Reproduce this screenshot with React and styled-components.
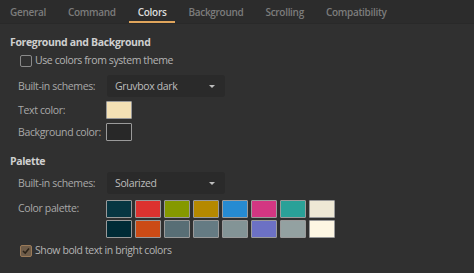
import styled, { createGlobalStyle } from "styled-components"

const Global = createGlobalStyle`
  html, body { margin: 0; padding: 0; background: #303030; }
  body { font-family: "Open Sans", "Noto Sans", sans-serif; }
`

const Page = styled.div`
  width: 474px;
  height: 273px;
  background: #303030;
  overflow: hidden;
  display: flex;
  flex-direction: column;
  white-space: nowrap;
`

const TabBar = styled.div`
  height: 23px;
  display: flex;
  padding-left: 10px;
  border-bottom: 1px solid #292929;
  background: #2c2c2c;
`

const Tab = styled.div`
  position: relative;
  padding: 0 11px;
  display: flex;
  align-items: center;
  font-size: 10px;
  font-weight: 600;
  letter-spacing: -0.3px;
  color: ${p => (p.active ? "#dcdcdc" : "#7c7c7c")};
  &:first-child { padding-left: 0; }
  &::after {
    content: "";
    display: ${p => (p.active ? "block" : "none")};
    position: absolute;
    left: 2px;
    right: 2px;
    bottom: 0;
    height: 2px;
    background: #e0a55c;
  }
`

const Content = styled.div`
  padding: 11px 10px 0 10px;
  display: flex;
  flex-direction: column;
`

const Heading = styled.div`
  font-size: 10.5px;
  font-weight: 700;
  color: #cfcfcf;
  letter-spacing: -0.35px;
  line-height: 14px;
  margin-top: ${p => p.top || 0}px;
`

const CheckRow = styled.label`
  display: flex;
  align-items: center;
  gap: 3px;
  margin: ${p => p.margin};
  padding-left: 10px;
  font-size: 10.5px;
  color: #b4b4b4;
  letter-spacing: -0.4px;
  line-height: 13px;
`

const Box = styled.span`
  width: 10px;
  height: 10px;
  border-radius: 2px;
  border: 1px solid ${p => (p.checked ? "#9a7a58" : "#8a8a8a")};
  background: ${p => (p.checked ? "#6e5c49" : "transparent")};
  display: flex;
  align-items: center;
  justify-content: center;
`

const Form = styled.div`
  display: grid;
  grid-template-columns: 88px auto;
  row-gap: ${p => p.gap || 4}px;
  padding-left: 8px;
  align-items: center;
  margin-top: ${p => p.top || 0}px;
`

const Label = styled.div`
  font-size: 10.5px;
  color: #a8a8a8;
  letter-spacing: -0.35px;
  align-self: ${p => p.align || "center"};
  padding-top: ${p => p.pad || 0}px;
`

const Select = styled.div`
  width: 118px;
  height: 22px;
  box-sizing: border-box;
  background: #2a2a2a;
  border-radius: 3px;
  display: flex;
  align-items: center;
  justify-content: space-between;
  padding: 0 8px;
  font-size: 10.5px;
  color: #bdbdbd;
  letter-spacing: -0.35px;
  margin-left: 1px;
`

const Caret = styled.span`
  width: 0;
  height: 0;
  border-left: 3px solid transparent;
  border-right: 3px solid transparent;
  border-top: 3px solid #bdbdbd;
  margin-right: 2px;
`

const Swatch = styled.div`
  width: 26px;
  height: 18px;
  box-sizing: border-box;
  border: 1px solid #9a9a9a;
  border-radius: 1px;
  background: ${p => p.color};
`

const Palette = styled.div`
  display: grid;
  grid-template-columns: repeat(8, 26px);
  column-gap: 3px;
  row-gap: 2px;
`

const row1 = ["#073642", "#dc322f", "#859900", "#b58900", "#268bd2", "#d33682", "#2aa198", "#eee8d5"]
const row2 = ["#002b36", "#cb4b16", "#586e75", "#657b83", "#839496", "#6c71c4", "#93a1a1", "#fdf6e3"]

const tabs = ["General", "Command", "Colors", "Background", "Scrolling", "Compatibility"]

export default function App() {
  return (
    <Page>
      <Global />
      <TabBar>
        {tabs.map(t => (
          <Tab key={t} active={t === "Colors"}>{t}</Tab>
        ))}
      </TabBar>
      <Content>
        <Heading>Foreground and Background</Heading>
        <CheckRow margin="5px 0 0 0">
          <Box />
          Use colors from system theme
        </CheckRow>
        <Form top={8}>
          <Label>Built-in schemes:</Label>
          <Select>Gruvbox dark<Caret /></Select>
          <Label>Text color:</Label>
          <Swatch color="#f4e1b5" />
          <Label>Background color:</Label>
          <Swatch color="#282828" />
        </Form>
        <Heading top={13}>Palette</Heading>
        <Form top={4} gap={6}>
          <Label>Built-in schemes:</Label>
          <Select>Solarized<Caret /></Select>
          <Label align="start" pad={1}>Color palette:</Label>
          <Palette>
            {row1.concat(row2).map((c, i) => (
              <Swatch key={i} color={c} />
            ))}
          </Palette>
        </Form>
        <CheckRow margin="6px 0 0 0">
          <Box checked>
            <svg width="8" height="8" viewBox="0 0 8 8">
              <path d="M1 4 L3.2 6 L7 1.5" stroke="#2a2218" strokeWidth="1.6" fill="none" />
            </svg>
          </Box>
          Show bold text in bright colors
        </CheckRow>
      </Content>
    </Page>
  )
}
